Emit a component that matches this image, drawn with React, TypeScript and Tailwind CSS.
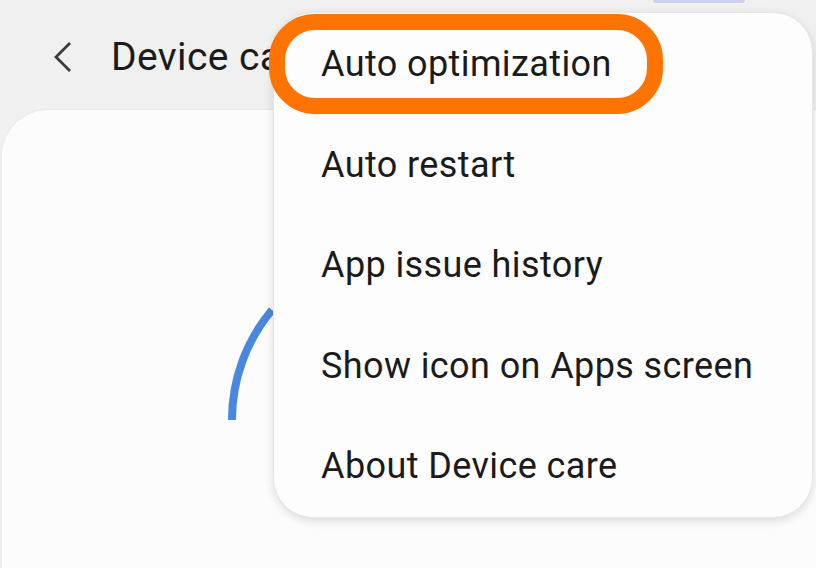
export default function App() {
  const items = [
    "Auto optimization",
    "Auto restart",
    "App issue history",
    "Show icon on Apps screen",
    "About Device care",
  ];

  return (
    <div className="relative flex h-[568px] w-[816px] flex-col overflow-hidden bg-[#f0f0f0] font-['Roboto',sans-serif] text-[#1b1b1b]">
      {/* status strip */}
      <div className="absolute left-[653px] top-0 h-[3px] w-[92px] rounded-b bg-[#cdd0ea]" />

      {/* header */}
      <div className="flex h-[110px] items-center pl-[50px] pt-[4px]">
        <svg width="26" height="34" viewBox="0 0 26 34" className="mr-[35px]">
          <path d="M20 3 L6 17 L20 31" fill="none" stroke="#3a3a3a" strokeWidth="2.8" />
        </svg>
        <span className="text-[39px] leading-none tracking-[0.4px]">Device care</span>
      </div>

      {/* card */}
      <div className="ml-[2px] flex-1 rounded-tl-[46px] bg-[#fcfcfc] shadow-[0_-1px_2px_rgba(0,0,0,0.04)]">
        <svg width="814" height="458" viewBox="0 0 814 458">
          <path
            d="M230 310 A171 171 0 0 1 270 200"
            fill="none"
            stroke="#4a88e0"
            strokeWidth="8"
          />
        </svg>
      </div>

      {/* overflow menu */}
      <div className="absolute left-[273px] top-[12px] w-[540px] rounded-[40px] border border-[#e6e6e6] bg-[#fdfdfd] pt-[1px] shadow-[0_3px_10px_rgba(0,0,0,0.13)]">
        {items.map((item) => (
          <div key={item} className="flex h-[100.5px] items-center pl-[47px] text-[36px] leading-none tracking-[0.4px]">
            {item}
          </div>
        ))}

        {/* highlight */}
        <div className="absolute left-[-5px] top-[1px] h-[100px] w-[394px] rounded-[46px] border-[16px] border-[#ff7300]" />
      </div>
    </div>
  );
}
